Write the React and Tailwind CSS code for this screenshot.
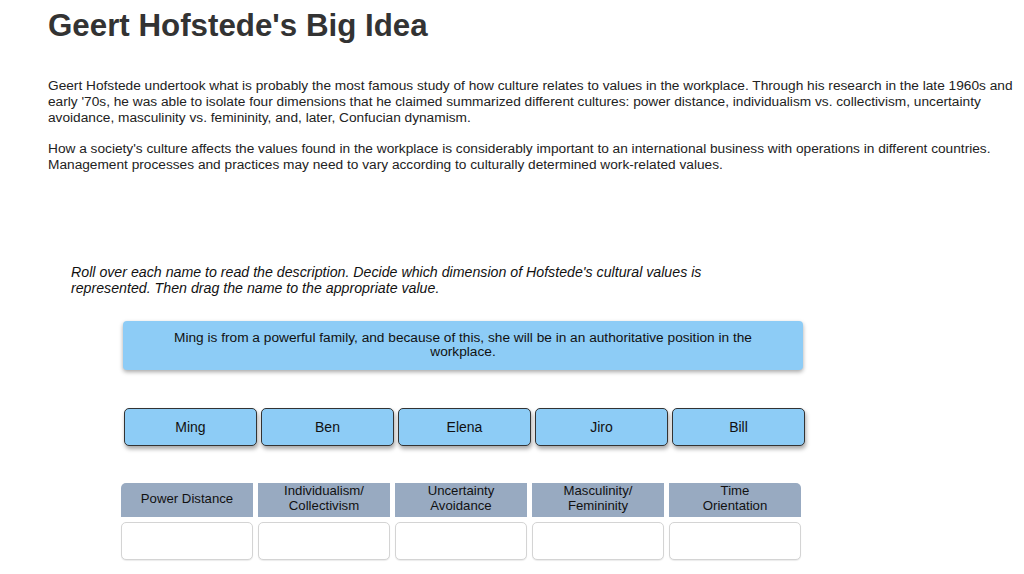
import React from 'react';

const names = ['Ming', 'Ben', 'Elena', 'Jiro', 'Bill'];
const values = [
  ['Power Distance'],
  ['Individualism/', 'Collectivism'],
  ['Uncertainty', 'Avoidance'],
  ['Masculinity/', 'Femininity'],
  ['Time', 'Orientation'],
];

export default function App() {
  return (
    <div className="w-[1024px] h-[574px] bg-white overflow-hidden text-[#222] font-['Liberation_Sans',Arial,sans-serif]">
      <h1 className="pl-[48px] pt-[8px] text-[31.3px] leading-[36px] font-bold text-[#333]">
        Geert Hofstede's Big Idea
      </h1>

      <div className="pl-[48px] mt-[34px] text-[13.7px] leading-[16px] text-[#222] whitespace-nowrap">
        <p>
          Geert Hofstede undertook what is probably the most famous study of how culture relates to values in the workplace. Through his research in the late 1960s and
          <br />
          early '70s, he was able to isolate four dimensions that he claimed summarized different cultures: power distance, individualism vs. collectivism, uncertainty
          <br />
          avoidance, masculinity vs. femininity, and, later, Confucian dynamism.
        </p>
        <p className="mt-[15px]">
          How a society's culture affects the values found in the workplace is considerably important to an international business with operations in different countries.
          <br />
          Management processes and practices may need to vary according to culturally determined work-related values.
        </p>
      </div>

      <p className="pl-[71px] mt-[91px] text-[14.2px] leading-[16px] italic text-[#111] whitespace-nowrap">
        Roll over each name to read the description. Decide which dimension of Hofstede's cultural values is
        <br />
        represented. Then drag the name to the appropriate value.
      </p>

      <div className="ml-[123px] mt-[25px] w-[680px] h-[49px] bg-[#8dccf6] rounded-[4px] shadow-[0_2px_4px_rgba(0,0,0,0.35)] pt-[10px] text-center text-[13.7px] leading-[14px] text-[#111]">
        Ming is from a powerful family, and because of this, she will be in an authoritative position in the
        <br />
        workplace.
      </div>

      <div className="ml-[124px] mt-[38px] flex gap-[4px]">
        {names.map((n) => (
          <div
            key={n}
            className="w-[133px] h-[38px] flex items-center justify-center bg-[#8dccf6] border border-[#333] rounded-[5px] shadow-[1px_3px_4px_rgba(0,0,0,0.35)] text-[14px] text-[#111]"
          >
            {n}
          </div>
        ))}
      </div>

      <div className="ml-[121px] mt-[37px] flex gap-[5px]">
        {values.map((v, i) => (
          <div key={i} className="w-[132px] flex flex-col gap-[5px]">
            <div
              className={`h-[34px] pb-[4px] bg-[#98aac1] flex flex-col items-center justify-center text-[13.2px] leading-[15px] text-[#111] ${
                i === 0 ? 'rounded-tl-[5px]' : ''
              } ${i === 4 ? 'rounded-tr-[5px]' : ''}`}
            >
              {v.map((line) => (
                <span key={line}>{line}</span>
              ))}
            </div>
            <div className="h-[38px] bg-white border border-[#d4d4d4] rounded-[5px] shadow-[0_1px_1px_rgba(0,0,0,0.08)]" />
          </div>
        ))}
      </div>
    </div>
  );
}
